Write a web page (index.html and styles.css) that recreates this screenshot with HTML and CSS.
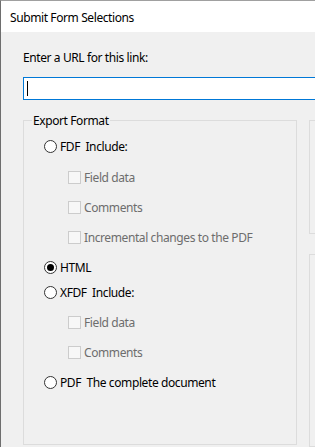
FILE: index.html
```html
<!DOCTYPE html>
<html lang="en">
<head>
    <meta charset="UTF-8">
    <meta name="viewport" content="width=device-width, initial-scale=1.0">
    <title>Submit Form Selections</title>
    <link rel="stylesheet" href="styles.css">
</head>
<body>
    <div class="window">
        <div class="titlebar">Submit Form Selections</div>
        <div class="content">
            <div class="url-label">Enter a URL for this link:</div>
            <div class="url-input"><span class="caret"></span></div>

            <div class="panels">
                <fieldset class="export">
                    <legend>Export Format</legend>

                    <div class="row first"><span class="radio"></span><span>FDF&nbsp; Include:</span></div>
                    <div class="row sub gap-1"><span class="check"></span><span>Field data</span></div>
                    <div class="row sub"><span class="check"></span><span>Comments</span></div>
                    <div class="row sub"><span class="check"></span><span>Incremental changes to the PDF</span></div>
                    <div class="row"><span class="radio checked"></span><span>HTML</span></div>
                    <div class="row tight"><span class="radio"></span><span>XFDF&nbsp; Include:</span></div>
                    <div class="row sub"><span class="check"></span><span>Field data</span></div>
                    <div class="row sub"><span class="check"></span><span>Comments</span></div>
                    <div class="row"><span class="radio"></span><span>PDF&nbsp; The complete document</span></div>
                </fieldset>

                <div class="side">
                    <div class="box box-top"></div>
                    <div class="box box-bottom"></div>
                </div>
            </div>
        </div>
    </div>
</body>
</html>
```

FILE: styles.css
```css
body {
    margin: 0;
    padding: 0;
    font-family: "Noto Sans", sans-serif;
    font-size: 12px;
    letter-spacing: -0.4px;
    color: #000000;
    background-color: #f0f0f0;
    overflow: hidden;
}

.window {
    border-top: 1px solid #a0a0a0;
    border-left: 1px solid #6e6e6e;
    height: 446px;
    background-color: #f0f0f0;
}

.titlebar {
    background-color: #ffffff;
    height: 31px;
    line-height: 33px;
    padding-left: 9px;
}

.content {
    padding-left: 22px;
}

.url-label {
    height: 45px;
    line-height: 16px;
    padding-top: 18px;
    box-sizing: border-box;
}

.url-input {
    height: 23px;
    box-sizing: border-box;
    border: 1px solid #0078d7;
    background-color: #ffffff;
    margin-right: -10px;
    display: flex;
    align-items: center;
    padding-left: 3px;
}

.caret {
    width: 1px;
    height: 15px;
    background-color: #000000;
}

.panels {
    display: flex;
    margin-top: 12px;
}

/* Export Format group */
.export {
    width: 274px;
    height: 333px;
    box-sizing: border-box;
    margin: 0;
    padding: 0 0 0 20px;
    border: 1px solid #dcdcdc;
    flex-shrink: 0;
}

.export legend {
    margin-left: -12px;
    padding: 0 1px;
    line-height: 16px;
    position: relative;
    top: 1px;
}

.row {
    display: flex;
    align-items: center;
    height: 30px;
}

.row.first {
    margin-top: 3px;
}

.row.gap-1 {
    margin-top: 1px;
}

.row.tight {
    margin-top: -5px;
}

.row.sub {
    padding-left: 24px;
    color: #6d6d6d;
}

.radio {
    width: 13px;
    height: 13px;
    box-sizing: border-box;
    border: 1px solid #333333;
    border-radius: 50%;
    background-color: #ffffff;
    margin-right: 3px;
    display: flex;
    align-items: center;
    justify-content: center;
}

.radio.checked::after {
    content: "";
    width: 7px;
    height: 7px;
    border-radius: 50%;
    background-color: #000000;
}

.check {
    width: 13px;
    height: 13px;
    box-sizing: border-box;
    border: 1px solid #cccccc;
    background-color: #f7f7f7;
    margin-right: 3px;
}

/* right-hand groups, clipped by the window */
.side {
    margin-left: 12px;
    padding-top: 8px;
    flex: 1;
    display: flex;
    flex-direction: column;
    gap: 20px;
}

.box {
    border: 1px solid #dcdcdc;
    margin-right: -20px;
}

.box-top {
    height: 112px;
}

.box-bottom {
    height: 191px;
}
```
